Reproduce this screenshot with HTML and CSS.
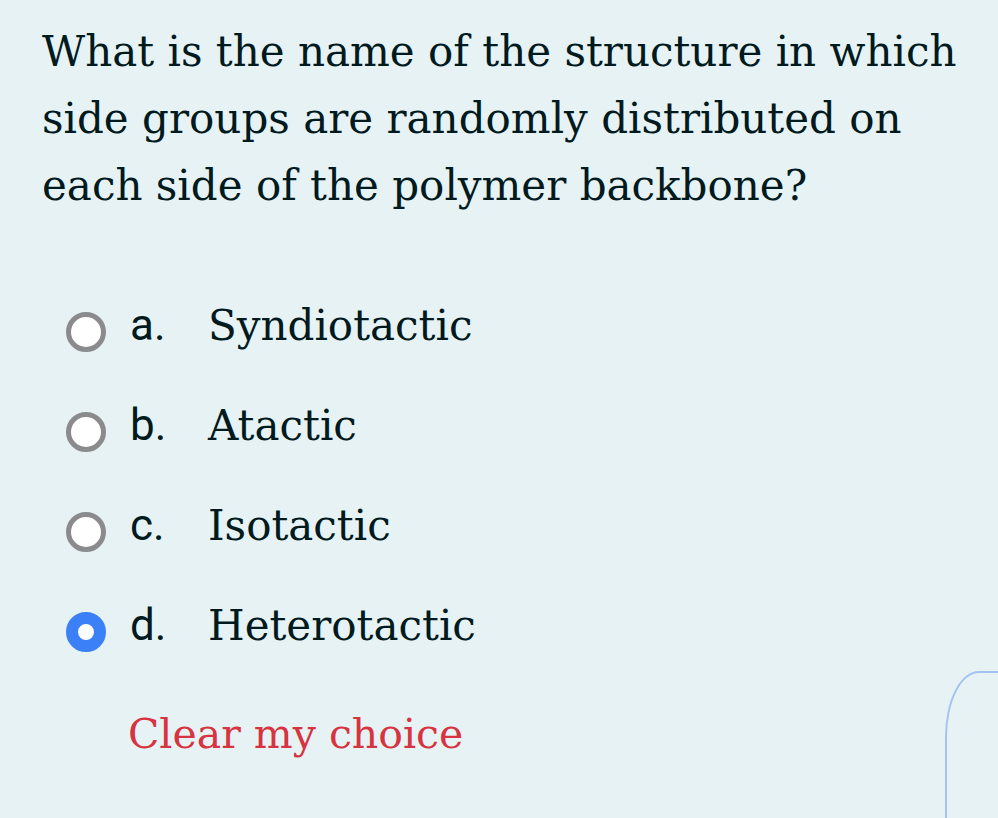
FILE: index.html
```html
<!DOCTYPE html>
<html>
<head>
<meta charset="utf-8">
<link rel="stylesheet" href="styles.css">
</head>
<body>
<div class="page">
  <div class="qtext">What is the name of the structure in which side groups are randomly distributed on each side of the polymer backbone?</div>
  <div class="answers">
    <div class="opt"><span class="radio"></span><span class="lbl">a.</span><span class="txt">Syndiotactic</span></div>
    <div class="opt"><span class="radio"></span><span class="lbl">b.</span><span class="txt">Atactic</span></div>
    <div class="opt"><span class="radio"></span><span class="lbl">c.</span><span class="txt">Isotactic</span></div>
    <div class="opt"><span class="radio checked"></span><span class="lbl">d.</span><span class="txt">Heterotactic</span></div>
  </div>
  <div class="clear">Clear my choice</div>
  <div class="corner"></div>
</div>
</body>
</html>
```
FILE: styles.css
```css
html, body {
  margin: 0;
  padding: 0;
  background: #e7f2f5;
}
.page {
  width: 998px;
  height: 818px;
  overflow: hidden;
  position: relative;
  box-sizing: border-box;
  padding: 18px 30px 0 42px;
  font-family: "DejaVu Serif", serif;
  color: #001a1e;
}
.qtext {
  font-size: 42px;
  line-height: 67px;
  width: 915px;
}
.answers {
  margin-top: 56px;
  display: flex;
  flex-direction: column;
}
.opt {
  display: flex;
  align-items: center;
  height: 100px;
  margin-left: 24px;
}
.radio {
  width: 30px;
  height: 30px;
  border: 5px solid #8b8b8d;
  border-radius: 50%;
  background: #fff;
  flex: none;
  margin-top: 13px;
}
.radio.checked {
  border: 12px solid #3b80f6;
  width: 16px;
  height: 16px;
}
.lbl {
  font-family: Roboto, "Liberation Sans", sans-serif;
  font-size: 44px;
  width: 78px;
  margin-left: 24px;
}
.txt {
  font-size: 42px;
}
.clear {
  color: #d63440;
  font-size: 41px;
  margin-left: 86px;
  margin-top: 35px;
}
.corner {
  position: absolute;
  left: 945px;
  top: 671px;
  width: 120px;
  height: 200px;
  border-top: 2px solid #a3c4f0;
  border-left: 2px solid #a3c4f0;
  border-top-left-radius: 34px 66px;
}
```
